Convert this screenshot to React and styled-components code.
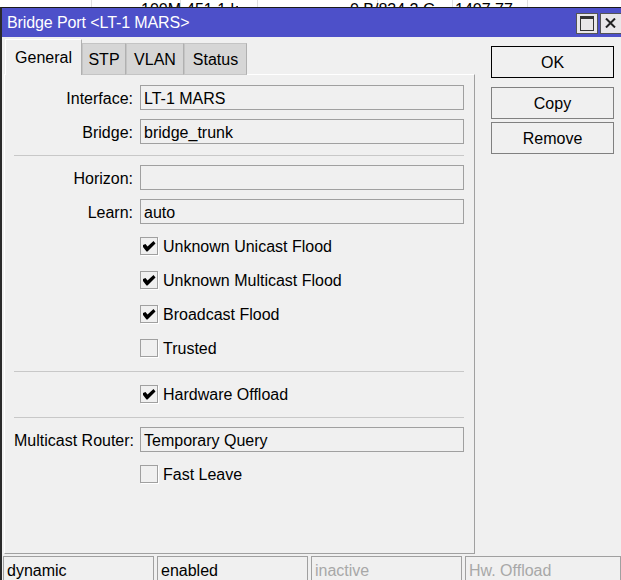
import React from 'react';
import styled, { createGlobalStyle } from 'styled-components';

const Global = createGlobalStyle`
  html, body {
    margin: 0;
    padding: 0;
    background: #fff;
    overflow: hidden;
  }
  * {
    box-sizing: border-box;
  }
`;

const Page = styled.div`
  width: 621px;
  height: 580px;
  overflow: hidden;
  display: flex;
  flex-direction: column;
  font-family: 'Liberation Sans', Arial, sans-serif;
  font-size: 16px;
  color: #000;
`;

const BackRow = styled.div`
  height: 7px;
  flex: none;
  background: #fff;
  position: relative;
  overflow: hidden;
`;

const BackCell = styled.span`
  position: absolute;
  top: 1px;
  left: ${props => props.x}px;
  height: 6px;
  overflow: hidden;
  font-size: 16px;
  line-height: 18px;
  white-space: nowrap;
`;

const BackLine = styled.i`
  position: absolute;
  top: 0;
  bottom: 0;
  left: ${props => props.x}px;
  width: 1px;
  background: #e0e0e0;
`;

const Win = styled.div`
  flex: 1;
  min-height: 0;
  display: flex;
  flex-direction: column;
  background: #f0f0f0;
  border-top: 1px solid #1a1a1a;
  border-left: 2px solid #2a2a2a;
`;

const Title = styled.div`
  height: 29px;
  flex: none;
  background: #4d50c9;
  color: #fff;
  display: flex;
  align-items: center;
  padding: 1px 0 0 5px;
  font-size: 16px;
  overflow: hidden;
`;

const TitleText = styled.div`
  flex: 1;
  letter-spacing: -0.1px;
`;

const WinBtn = styled.div`
  width: 22px;
  height: 21px;
  flex: none;
  margin-left: 2px;
  background: #e9e7e9;
  border: 1px solid #555;
  display: flex;
  align-items: center;
  justify-content: center;
`;

const CloseBtn = styled(WinBtn)`
  margin-right: -1px;
  justify-content: flex-start;
  padding-left: 4px;
`;

const Body = styled.div`
  flex: 1;
  min-height: 0;
  display: flex;
  padding: 2px 7px 0 2px;
`;

const Left = styled.div`
  width: 471px;
  display: flex;
  flex-direction: column;
`;

const Tabs = styled.div`
  height: 36px;
  flex: none;
  display: flex;
  align-items: flex-end;
  padding-left: 1px;
  margin-bottom: -1px;
  position: relative;
  z-index: 1;
`;

const Tab = styled.div`
  height: ${props => (props.active ? 36 : 32)}px;
  width: ${props => props.w}px;
  background: ${props => (props.active ? '#f0f0f0' : '#d6d6d6')};
  border: 1px solid ${props => (props.active ? '#fff' : '#c4c4c4')};
  border-bottom: ${props => (props.active ? 'none' : '1px solid #c4c4c4')};
  border-right-color: #b0b0b0;
  display: flex;
  align-items: center;
  justify-content: center;
  padding-top: ${props => (props.active ? 0 : 1)}px;
  font-size: 16px;
`;

const Panel = styled.div`
  height: 480px;
  flex: none;
  border-top: 1px solid #fff;
  border-left: 1px solid #fff;
  border-right: 1px solid #a0a0a0;
  border-bottom: 1px solid #a0a0a0;
  padding: 10px 10px 0 9px;
  display: flex;
  flex-direction: column;
`;

const Row = styled.div`
  height: 25px;
  flex: none;
  display: flex;
  align-items: center;
  margin-bottom: ${props => props.after ?? 9}px;
`;

const Label = styled.div`
  width: 126px;
  flex: none;
  text-align: right;
  white-space: nowrap;
  padding: 3px 7px 0 0;
  font-size: 16px;
`;

const Field = styled.div`
  flex: 1;
  height: 25px;
  border: 1px solid #a0a0a0;
  background: #f0f0f0;
  padding: 1px 0 0 3px;
  line-height: 23px;
  font-size: 16px;
`;

const Sep = styled.div`
  height: 1px;
  flex: none;
  background: #c8c8c8;
  margin: ${props => props.top}px 0 ${props => props.bottom}px 0;
`;

const CheckRow = styled.div`
  height: 18px;
  flex: none;
  display: flex;
  align-items: center;
  margin: 0 0 16px 126px;
  font-size: 16px;
`;

const Box = styled.div`
  width: 18px;
  height: 18px;
  flex: none;
  border: 1px solid #a0a0a0;
  box-shadow: 1px 1px 0 #fff;
  margin-right: 5px;
  background: #f0f0f0;
  display: flex;
  align-items: center;
  justify-content: center;
`;

const CheckText = styled.span`
  padding-top: 2px;
`;

const Side = styled.div`
  flex: 1;
  padding: 7px 0 0 16px;
  display: flex;
  flex-direction: column;
`;

const Btn = styled.div`
  height: 32px;
  flex: none;
  display: flex;
  align-items: center;
  justify-content: center;
  padding-top: 2px;
  font-size: 16px;
  background: #f0f0f0;
  border: ${props => (props.primary ? '1px solid #000' : '1px solid #808080')};
  margin-bottom: ${props => (props.primary ? 9 : 3)}px;
`;

const Status = styled.div`
  height: 24px;
  flex: none;
  display: flex;
  gap: 3px;
  padding-left: 1px;
  margin-top: 2px;
`;

const Cell = styled.div`
  width: ${props => props.w}px;
  flex: none;
  border-top: 1px solid #a0a0a0;
  border-left: 1px solid #a0a0a0;
  border-right: 1px solid #a0a0a0;
  padding: 5px 0 0 3px;
  font-size: 16px;
  color: ${props => (props.off ? '#a8a8a8' : '#000')};
`;

const Check = () => (
  <svg width="14" height="11" viewBox="0 0 14 11">
    <path d="M1 4 L3.5 3 L5.5 5.5 L11.5 0 L13.5 2.5 L5.5 10.5 L4.5 10.5 L1 6 Z" fill="#000" />
  </svg>
);

const CheckItem = ({ checked, children }) => (
  <CheckRow>
    <Box>{checked && <Check />}</Box>
    <CheckText>{children}</CheckText>
  </CheckRow>
);

const App = () => (
  <Page>
    <Global />
    <BackRow>
      <BackLine x={91} />
      <BackLine x={180} />
      <BackLine x={257} />
      <BackLine x={377} />
      <BackLine x={452} />
      <BackLine x={527} />
      <BackCell x={141}>100M</BackCell>
      <BackCell x={186}>451.1 k</BackCell>
      <BackCell x={350}>0 B/834.2 G</BackCell>
      <BackCell x={455}>1407.77</BackCell>
    </BackRow>
    <Win>
      <Title>
        <TitleText>Bridge Port &lt;LT-1 MARS&gt;</TitleText>
        <WinBtn>
          <svg width="14" height="15" viewBox="0 0 14 15">
            <rect x="0.5" y="0.5" width="13" height="14" fill="none" stroke="#333" strokeWidth="1" />
            <rect x="0" y="0" width="14" height="3" fill="#333" />
          </svg>
        </WinBtn>
        <CloseBtn>
          <svg width="11" height="10" viewBox="0 0 11 10">
            <path d="M1 0.5 L10 9.5 M10 0.5 L1 9.5" stroke="#222" strokeWidth="2" />
          </svg>
        </CloseBtn>
      </Title>
      <Body>
        <Left>
          <Tabs>
            <Tab active w={77}>General</Tab>
            <Tab w={44}>STP</Tab>
            <Tab w={58}>VLAN</Tab>
            <Tab w={63}>Status</Tab>
          </Tabs>
          <Panel>
            <Row>
              <Label>Interface:</Label>
              <Field>LT-1 MARS</Field>
            </Row>
            <Row>
              <Label>Bridge:</Label>
              <Field>bridge_trunk</Field>
            </Row>
            <Sep top={2} bottom={9} />
            <Row>
              <Label>Horizon:</Label>
              <Field />
            </Row>
            <Row after={13}>
              <Label>Learn:</Label>
              <Field>auto</Field>
            </Row>
            <CheckItem checked>Unknown Unicast Flood</CheckItem>
            <CheckItem checked>Unknown Multicast Flood</CheckItem>
            <CheckItem checked>Broadcast Flood</CheckItem>
            <CheckItem>Trusted</CheckItem>
            <Sep top={-2} bottom={13} />
            <CheckItem checked>Hardware Offload</CheckItem>
            <Sep top={-2} bottom={9} />
            <Row after={13}>
              <Label>Multicast Router:</Label>
              <Field>Temporary Query</Field>
            </Row>
            <CheckItem>Fast Leave</CheckItem>
          </Panel>
        </Left>
        <Side>
          <Btn primary>OK</Btn>
          <Btn>Copy</Btn>
          <Btn>Remove</Btn>
        </Side>
      </Body>
      <Status>
        <Cell w={151}>dynamic</Cell>
        <Cell w={151}>enabled</Cell>
        <Cell w={151} off>inactive</Cell>
        <Cell w={156} off>Hw. Offload</Cell>
      </Status>
    </Win>
  </Page>
);

export default App;
